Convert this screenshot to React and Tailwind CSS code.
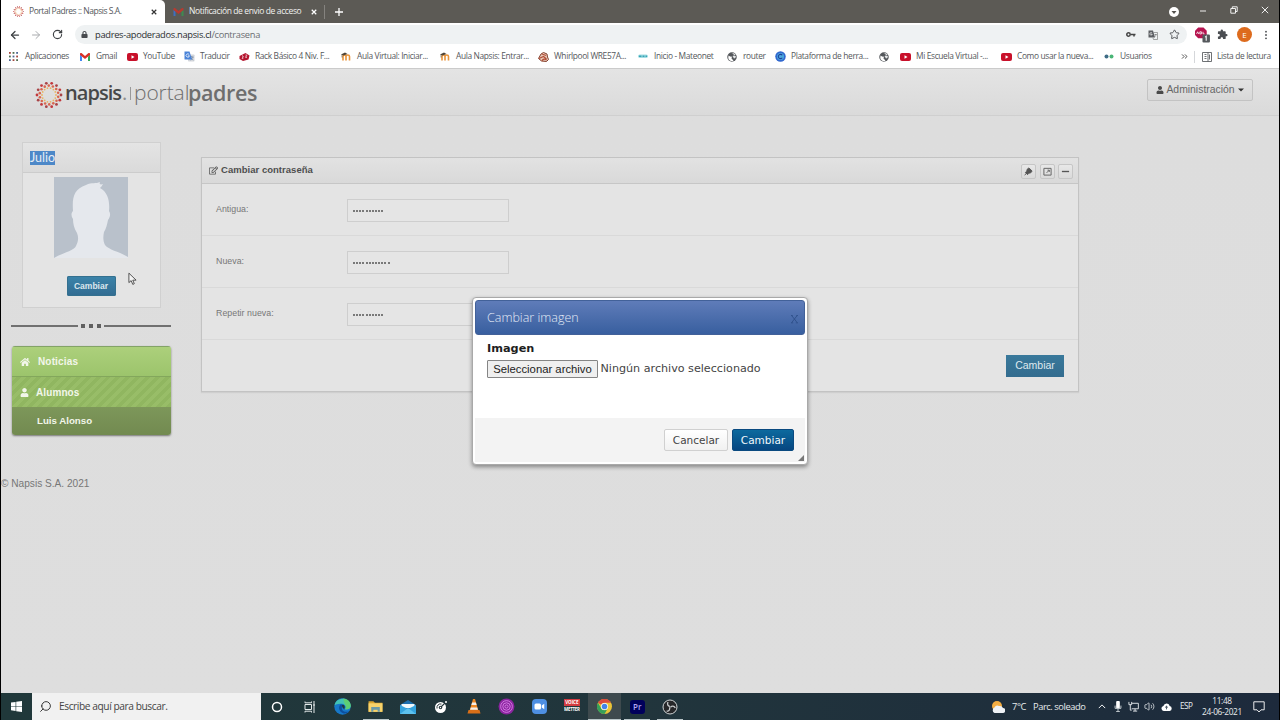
import React from "react";
import { FaUser, FaHome, FaRegEdit, FaLock } from "react-icons/fa";
import { MdExtension } from "react-icons/md";
import { ArrowLeft, ArrowRight, RotateCw, Star, Search, Volume2 } from "lucide-react";

const ui = "font-['Open_Sans','Noto_Sans',sans-serif]";
const arial = "font-['Liberation_Sans',Arial,sans-serif]";
const verdana = "font-['DejaVu_Sans',sans-serif]";

/* ---------- small drawings ---------- */
const DOTS = Array.from({ length: 14 }, (_, i) => (i * Math.PI * 2) / 14);

function Sun({ className }) {
  return (
    <svg viewBox="-14 -14 28 28" className={className}>
      {DOTS.map((a, i) => (
        <g key={i}>
          <circle cx={Math.cos(a) * 12} cy={Math.sin(a) * 12} r="1.4" fill={i % 2 ? "#c2383c" : "#a94447"} />
          <circle cx={Math.cos(a + 0.2) * 9.4} cy={Math.sin(a + 0.2) * 9.4} r="1.3" fill="#d9674f" />
          <circle cx={Math.cos(a) * 7} cy={Math.sin(a) * 7} r="0.9" fill="#e9b45e" />
        </g>
      ))}
    </svg>
  );
}

const GmailIcon = () => (
  <svg viewBox="0 0 20 16" className="h-[8px] w-[10px]">
    <path d="M0 3v13h4V7z" fill="#4285f4" />
    <path d="M20 3v13h-4V7z" fill="#34a853" />
    <path d="M0 2q0-3 3-2l7 6 7-6q3-1 3 2v2L10 12 0 4z" fill="#d93025" />
  </svg>
);
const YouTubeIcon = () => (
  <svg viewBox="0 0 22 16" className="h-[8px] w-[11px]">
    <rect width="22" height="16" rx="4" fill="#c8102a" />
    <path d="M9 4.500v7l6-3.500z" fill="#fff" />
  </svg>
);
const AppsIcon = () => (
  <svg viewBox="0 0 10 10" className="size-[9px]">
    {[0, 4, 8].map((y, r) =>
      [0, 4, 8].map((x, c) => (
        <rect key={x + "-" + y} x={x} y={y} width="2" height="2" fill={["#a3483e", "#4f6d4e", "#4c6592"][(r + c) % 3]} />
      ))
    )}
  </svg>
);
const TranslateIcon = () => (
  <svg viewBox="0 0 22 22" className="size-[11px]">
    <rect x="8" y="7" width="13" height="14" rx="1.500" fill="#d3d6db" />
    <path d="M12 12h7M15.500 10v2M18 12c-1 3-3 4-5 6M13.500 14l5 4" stroke="#67809f" strokeWidth="1.300" fill="none" />
    <path d="M1 1h10l5 16H2q-1 0-1-1z" fill="#4a83d8" />
    <path d="M10.500 7.500a3.300 3.300 0 1 0 .3 2.200H8" stroke="#fff" strokeWidth="1.500" fill="none" />
  </svg>
);
const RackIcon = () => (
  <svg viewBox="0 0 22 18" className="h-[10px] w-[11px]">
    <path d="M1 7 13 1l8 5-2 8-11 3-7-4z" fill="#b5152f" />
    <path d="M6 7c3-1 3 1 1 3s0 3 2 1M13 5c3-1 3 1 1 3s0 3 2 1" stroke="#fff" strokeWidth="1.500" fill="none" />
  </svg>
);
const MoodleIcon = () => (
  <svg viewBox="0 0 22 18" className="h-[9px] w-[11px]">
    <path d="M4 17V9q0-3 3-3t3 3v8M10 9q0-3 3.500-3T17 9v8" stroke="#e9943a" strokeWidth="3.200" fill="none" />
    <path d="M0 5 8 1l5 3-8 3z" fill="#4f4436" />
    <path d="M2 5v6" stroke="#4f4436" strokeWidth="1.200" />
  </svg>
);
const WhirlIcon = () => (
  <svg viewBox="0 0 22 20" className="h-[10px] w-[11px]">
    <path d="M1 13 6 4l5-3 7 3 1 6 2 5-4 4-10-1z" fill="#e8c9b8" stroke="#83412f" strokeWidth="2" />
    <path d="M2 13l9-4 6 5M8 4l8 3M8 18c2-5 6-4 10-2" stroke="#b24f38" strokeWidth="2.300" fill="none" />
  </svg>
);
const MateoIcon = () => (
  <svg viewBox="0 0 20 10" className="h-[5px] w-[10px]">
    <rect y="1" width="20" height="7" rx="3.500" fill="#a5dde4" />
    <path d="M2 4.500h5M9 4.500h4M15 4.500h3" stroke="#38a5b5" strokeWidth="3" />
  </svg>
);
const GlobeIcon = () => (
  <svg viewBox="0 0 20 20" className="size-[10px]">
    <circle cx="10" cy="10" r="9.500" fill="#54575b" />
    <path d="M3 7q3 3 7 2l-1 4 3 3 1 2.500Q4 19 2.500 12zM9 2q4 0 4 3l3 1 1-1q-3-4-8-3z" fill="#fff" />
    <path d="M11 8q4-2 7 1-1 4-4 4z" fill="#e6e8ea" />
  </svg>
);
const PlatIcon = () => (
  <svg viewBox="0 0 22 22" className="size-[11px]">
    <circle cx="11" cy="11" r="10.500" fill="#3168cf" />
    <circle cx="11" cy="11" r="7" fill="#4ba8dc" />
    <path d="M14.500 8.500a4.300 4.300 0 1 0 0 5" stroke="#203f9c" strokeWidth="2.200" fill="none" />
  </svg>
);
const UsersDots = () => (
  <svg viewBox="0 0 20 10" className="h-[5px] w-[10px]">
    <circle cx="5" cy="5" r="4" fill="#3f6c86" />
    <circle cx="15" cy="5" r="4" fill="#49b576" />
  </svg>
);

const BOOKMARKS = [
  { t: "Aplicaciones", I: AppsIcon, c: "w-[71px]" },
  { t: "Gmail", I: GmailIcon, c: "w-[47px]" },
  { t: "YouTube", I: YouTubeIcon, c: "w-[57px]" },
  { t: "Traducir", I: TranslateIcon, c: "w-[55px]" },
  { t: "Rack Básico 4 Niv. F...", I: RackIcon, c: "w-[102px]" },
  { t: "Aula Virtual: Iniciar...", I: MoodleIcon, c: "w-[99px]" },
  { t: "Aula Napsis: Entrar...", I: MoodleIcon, c: "w-[98px]" },
  { t: "Whirlpool WRE57A...", I: WhirlIcon, c: "w-[100px]" },
  { t: "Inicio - Mateonet", I: MateoIcon, c: "w-[89px]" },
  { t: "router", I: GlobeIcon, c: "w-[48px]" },
  { t: "Plataforma de herra...", I: PlatIcon, c: "w-[104px]" },
  { t: "", I: GlobeIcon, c: "w-[21px]" },
  { t: "Mi Escuela Virtual -...", I: YouTubeIcon, c: "w-[101px]" },
  { t: "Como usar la nueva...", I: YouTubeIcon, c: "w-[103px]" },
  { t: "Usuarios", I: UsersDots, c: "w-[77px]" },
];

function Browser() {
  return (
    <div className={"w-full shrink-0 " + ui}>
      <div className="flex h-[23px] items-center bg-[#5c5a55] text-[8.500px] leading-none">
        <div className="flex h-full w-[164px] items-center rounded-tr-[5px] bg-white pl-[12px] text-[#55585c]">
          <Sun className="size-[11px]" />
          <span className="ml-[5px] w-[122px] whitespace-nowrap tracking-[-0.46px]">Portal Padres :: Napsis S.A.</span>
          <svg viewBox="0 0 8 8" className="size-[6px]"><path d="M1 1l6 6M7 1L1 7" stroke="#333" strokeWidth="1.600" /></svg>
        </div>
        <div className="flex h-full items-center pl-[8px] text-[#f1f1ef]">
          <svg viewBox="0 0 20 16" className="h-[8px] w-[11px]">
            <path d="M0 3v13h4V7z" fill="#3f6fc0" /><path d="M20 3v13h-4V7z" fill="#3e8b50" />
            <path d="M0 2q0-3 3-2l7 6 7-6q3-1 3 2v2L10 12 0 4z" fill="#b73a30" />
          </svg>
          <span className="ml-[5px] w-[122px] whitespace-nowrap tracking-[-0.38px]">Notificación de envio de acceso</span>
          <svg viewBox="0 0 8 8" className="size-[6px]"><path d="M1 1l6 6M7 1L1 7" stroke="#fff" strokeWidth="1.600" /></svg>
          <div className="ml-[7px] h-[14px] w-px bg-[#85837f]" />
          <svg viewBox="0 0 8 8" className="ml-[10px] size-[8px]"><path d="M4 0v8M0 4h8" stroke="#fff" strokeWidth="1.300" /></svg>
        </div>
        <div className="ml-auto flex h-full items-center pr-[10px]">
          <svg viewBox="0 0 10 10" className="size-[10px]"><circle cx="5" cy="5" r="5" fill="#fff" /><path d="M2.500 4h5L5 7z" fill="#54524e" /></svg>
          <svg viewBox="0 0 8 8" className="mb-[2px] ml-[20px] size-[8px]"><path d="M1 4h6" stroke="#fff" strokeWidth="0.900" /></svg>
          <svg viewBox="0 0 8 8" className="mb-[3px] ml-[23px] size-[8px]"><path d="M.8 2.500h4.700v4.700H.8zM2.300 2.500V.8h4.900v4.700H5.500" fill="none" stroke="#fff" strokeWidth="0.900" /></svg>
          <svg viewBox="0 0 8 8" className="mb-[4px] ml-[23px] size-[8px]"><path d="M.8.8l6.400 6.400M7.200.8L.8 7.200" stroke="#fff" strokeWidth="0.900" /></svg>
        </div>
      </div>

      <div className="flex h-[23px] items-center bg-white pl-[8px] pr-[6px]">
        <ArrowLeft size={12} color="#3f4245" strokeWidth={2.5} />
        <ArrowRight size={12} color="#a9abae" strokeWidth={2} className="ml-[9px]" />
        <RotateCw size={11} color="#3f4245" strokeWidth={2.5} className="ml-[10px]" />
        <div className="ml-[12px] flex h-[19px] w-[1112px] items-center rounded-full bg-[#eff2f3] pl-[6px] text-[9.300px] leading-none text-[#2b2e31]">
          <FaLock size={7} color="#484b4f" />
          <span className="ml-[7px] whitespace-nowrap tracking-[-0.3px]">
            padres-apoderados.napsis.cl<span className="text-[#6b6e72]">/contrasena</span>
          </span>
          <div className="ml-auto flex items-center gap-[11px] pr-[7px]">
            <svg viewBox="0 0 20 10" className="mr-[1px] h-[5px] w-[10px]"><circle cx="5" cy="5" r="3.400" fill="none" stroke="#444" strokeWidth="3" /><path d="M9 5h10M16 5v4" stroke="#444" strokeWidth="3" /></svg>
            <svg viewBox="0 0 20 20" className="size-[10px]">
              <path d="M1 1h9l4 14H1z" fill="#5c5f63" /><path d="M11 5h8v14h-8l-1-3" fill="none" stroke="#777" strokeWidth="1.300" />
              <path d="M8 6a2.500 2.500 0 1 0 .5 2.500H6" fill="none" stroke="#fff" strokeWidth="1.300" /><path d="M13 9h5M15 8q2 4-2 6" stroke="#777" fill="none" strokeWidth="1.300" />
            </svg>
            <Star size={11} color="#4b4e52" strokeWidth={2} />
          </div>
        </div>
        <svg viewBox="0 0 30 30" className="ml-[8px] size-[16px]">
          <path d="M6 1h10l6 6v8l-6 6H6l-6-6V7z" fill="#b5144f" />
          <path d="M3 13l2-4 2 4M9 9v4h3V9zM15 9v4h3" stroke="#fff" strokeWidth="1.500" fill="none" />
          <rect x="14" y="14" width="14" height="15" rx="2" fill="#55585c" />
          <path d="M19 19l2-1.500V26" stroke="#fff" strokeWidth="2" fill="none" />
        </svg>
        <MdExtension size={11} color="#4b4e52" className="ml-[6px]" />
        <div className="ml-[9px] flex size-[15px] items-center justify-center rounded-full bg-[#dd6b1d] text-[8px] text-white">E</div>
        <svg viewBox="0 0 4 12" className="ml-[12px] h-[10px] w-[4px]" fill="#4b4e52"><circle cx="2" cy="2" r="1.100" /><circle cx="2" cy="6" r="1.100" /><circle cx="2" cy="10" r="1.100" /></svg>
      </div>

      <div className="flex h-[22px] items-center bg-white pb-[1px] pl-[8px] text-[8.400px] leading-none tracking-[-0.36px] text-[#55585c]">
        {BOOKMARKS.map(({ t, I, c }, i) => (
          <div key={i} className={"flex shrink-0 items-center whitespace-nowrap " + c}>
            <span className="flex w-[16px] shrink-0"><I /></span>
            {t}
          </div>
        ))}
        <svg viewBox="0 0 8 6" className="h-[5px] w-[7px]"><path d="M1 .5L3.500 3 1 5.500M4.500.5L7 3 4.500 5.500" fill="none" stroke="#444" strokeWidth="1.100" /></svg>
        <div className="ml-[6px] h-[12px] w-px bg-[#d5d7da]" />
        <svg viewBox="0 0 20 20" className="ml-[7px] size-[10px]"><path d="M1 1h18v18H1zM5 5h4M5 9h4M5 13h4M12 1v18M15 5v10" fill="none" stroke="#55585c" strokeWidth="1.700" /></svg>
        <span className="ml-[5px] whitespace-nowrap tracking-[-0.35px]">Lista de lectura</span>
      </div>
    </div>
  );
}

/* ---------- page ---------- */
function Header() {
  return (
    <div className="flex h-[48px] shrink-0 items-center justify-between border-b border-t border-b-[#cfcfcf] border-t-[#cbcbcb] bg-linear-to-b from-[#e4e4e4] to-[#dadada] pl-[34px] pr-[26px]">
      <div className={"flex h-full items-center leading-none text-[#6e6e6e] " + ui}>
        <Sun className="mt-[5px] size-[28px]" />
        <span className="ml-[2px] mt-[1px] w-[57px] text-[20px] font-semibold tracking-[-0.95px] text-[#484848]">napsis</span>
        <span className="mt-[1px] w-[8px] text-[20px] text-[#8f8f8f]">.</span>
        <span className="mt-[3px] h-[13px] w-px bg-[#999]" />
        <span className="ml-[3px] mt-[1px] w-[54px] text-[21px] font-light tracking-[-0.1px]">portal</span>
        <span className="mt-[1px] text-[21.500px] font-semibold tracking-[-0.4px]">padres</span>
      </div>
      <div className={"mt-[-4px] flex h-[22px] w-[106px] items-center justify-center whitespace-nowrap rounded-[2px] border border-[#c3c3c3] bg-linear-to-b from-[#e3e3e3] to-[#d8d8d8] text-[10.400px] text-[#666] " + arial}>
        <FaUser size={8} color="#4a4a4a" className="mr-[2px]" />
        Administración
        <svg viewBox="0 0 6 4" className="ml-[3px] h-[4px] w-[6px]"><path d="M0 .5h6L3 3.500z" fill="#333" /></svg>
      </div>
    </div>
  );
}

function Sidebar() {
  return (
    <div className={"flex w-[160px] shrink-0 flex-col " + arial}>
      <div className="ml-[11px] h-[166px] w-[139px] border border-[#d0d0d0] bg-[#e4e4e4]">
        <div className="flex h-[30px] items-center border-b border-[#cccccc] bg-linear-to-b from-[#e4e4e4] to-[#dadada] pl-[7px] font-[Lato,'Open_Sans',sans-serif] text-[12.500px]">
          <span className="h-[14px] bg-[#4d88c8] leading-[14px] text-[#e8eef5]">Julio</span>
        </div>
        <div className="flex flex-col items-center pr-px pt-[4px]">
          <svg viewBox="0 0 74 81" className="h-[81px] w-[74px]">
            <rect width="74" height="81" fill="#b9c1cb" />
            <path d="M0 82V81C8 76 20 74 22 69c2-4 3-8 1-13-3-5-4-9-4-14-2-3-2-6 0-8-1-14 1-22 13-26 6-3 10-1 14-3-1 2 0 3 3 2-1 2-2 3-3 4 8 4 10 14 9 23 2 3 1 6-1 9-1 5-2 9-4 12-1 5-1 9 1 13 4 5 15 7 23 12v1z" fill="#e5e8ed" />
          </svg>
          <div className="mt-[18px] flex h-[20px] w-[49px] items-center justify-center rounded-[2px] bg-linear-to-b from-[#3b84aa] to-[#326b91] text-[8.500px] font-bold text-[#dbe7ee] shadow-[inset_0_0_0_1px_#34708f]">
            Cambiar
          </div>
        </div>
      </div>
      <div className="mt-[15px] flex h-[5px] items-center">
        <div className="h-[2px] w-[67px] bg-[#707070]" />
        <div className="flex flex-1 justify-center gap-[4px]">
          <i className="size-[4px] bg-[#606060]" /><i className="size-[4px] bg-[#606060]" /><i className="size-[4px] bg-[#606060]" />
        </div>
        <div className="h-[2px] w-[67px] bg-[#707070]" />
      </div>
      <div className="ml-px mt-[18px] h-[89px] w-[159px] overflow-hidden rounded-[3px] text-[10px] font-bold text-[#f2f6ea] shadow-[0_1px_2px_#777]">
        <div className="flex h-[31px] items-center border-b border-t border-b-[#83a75c] border-t-[#83a367] bg-linear-to-b from-[#acd07b] to-[#9cc46c] pl-[8px]">
          <FaHome size={10} /><span className="ml-[8px] tracking-[0.15px]">Noticias</span>
        </div>
        <div className="flex h-[30px] items-center bg-[repeating-linear-gradient(135deg,#98bd68_0_3.500px,#90b660_3.500px_7px)] pl-[8px]">
          <FaUser size={9} /><span className="ml-[7px] tracking-[0.1px]">Alumnos</span>
        </div>
        <div className="h-[28px] bg-linear-to-b from-[#7d975a] to-[#728a50] pl-[25px] leading-[27px]">
          <span className="text-[9.700px]">Luis Alonso</span>
        </div>
      </div>
    </div>
  );
}

function Tool({ children }) {
  return (
    <div className="flex size-[15px] items-center justify-center rounded-[2px] border border-[#c6c6c6] bg-linear-to-b from-[#e8e8e8] to-[#dadada]">{children}</div>
  );
}

const FIELDS = [
  { label: "Antigua:", dots: 10 },
  { label: "Nueva:", dots: 12 },
  { label: "Repetir nueva:", dots: 10 },
];

function Panel() {
  return (
    <div className={"ml-[30px] mt-[15px] flex h-[235px] w-[878px] shrink-0 flex-col border border-[#c3c3c3] bg-[#e4e4e4] shadow-[0_1px_1px_#cfcfcf] " + arial}>
      <div className="flex h-[26px] items-center border-b border-[#c6c6c6] bg-linear-to-b from-[#e2e2e2] to-[#d9d9d9] pl-[7px] pr-[5px]">
        <FaRegEdit size={9} color="#555" />
        <span className="ml-[3px] text-[9.500px] font-bold tracking-[0.03px] text-[#4e4e4e]">Cambiar contraseña</span>
        <div className="ml-auto mt-[2px] flex gap-[3.500px]">
          <Tool><svg viewBox="0 0 10 10" className="size-[9px]"><path d="M5.500 1l3.500 3.500-1.500 2-2.500.5-1 1.500L1.500 6 3 5l.5-2.500zM3 6.500L.8 9.200" fill="#555" stroke="#555" /></svg></Tool>
          <Tool><svg viewBox="0 0 10 10" className="size-[9px]"><path d="M1 1.500h8v7.500H1zM4 6.500l3-3M5 3.500h2v2" fill="none" stroke="#666" strokeWidth="1.100" /></svg></Tool>
          <Tool><svg viewBox="0 0 10 10" className="size-[9px]"><path d="M1 5h8" stroke="#555" strokeWidth="1.500" /></svg></Tool>
        </div>
      </div>
      {FIELDS.map((f) => (
        <div key={f.label} className="flex h-[52px] items-center border-b border-[#d9d9d9] pl-[14px] pt-[2px]">
          <span className="w-[131px] pb-[2px] text-[8.800px] tracking-[0.03px] text-[#777]">{f.label}</span>
          <div className="flex h-[23px] w-[162px] items-center gap-[1.150px] border border-[#cecece] bg-[#e5e5e5] pl-[5px]">
            {Array.from({ length: f.dots }, (_, i) => <i key={i} className="size-[2px] rounded-full bg-[#555]" />)}
          </div>
        </div>
      ))}
      <div className="flex flex-1 items-center justify-end pr-[14px]">
        <div className="flex h-[22px] w-[58px] items-center justify-center bg-linear-to-b from-[#39799b] to-[#336c8f] text-[10.500px] text-[#dfe9ef]">Cambiar</div>
      </div>
    </div>
  );
}

function Modal() {
  return (
    <div className={"absolute left-[471px] top-[297px] flex h-[168px] w-[336px] flex-col rounded-[4px] border border-[#a9a9a9] bg-white p-[2px] shadow-[0_2px_4px_rgba(0,0,0,0.4)] " + verdana}>
      <div className={"flex h-[35px] shrink-0 items-center justify-between rounded-[3px] border border-[#426199] bg-linear-to-b from-[#5f7cb9] to-[#385f9f] pl-[11px] pr-[6px] pt-[1px] text-[12.500px] font-light text-[#e3eaf6] " + ui}>
        <span>Cambiar imagen</span>
        <svg viewBox="0 0 8 10" className="mt-[2px] h-[9px] w-[7px]"><path d="M.8.5l6.200 8M7 .5L.8 8.500M0 8.800h2.500M5.500 8.800H8M0 .5h2M6 .5h2" stroke="#2b4d86" strokeWidth="0.900" fill="none" /></svg>
      </div>
      <div className="flex-1 pl-[12px] pt-[7px]">
        <div className="text-[11.300px] font-bold leading-[14px] text-[#1e1e1e]">Imagen</div>
        <div className="mt-[4px] flex items-center">
          <div className={"flex h-[18px] w-[111px] items-center justify-center whitespace-nowrap rounded-[1px] border border-[#858585] bg-[#efefef] text-[11.300px] text-[#1c1c1c] " + arial}>Seleccionar archivo</div>
          <span className="ml-[2.500px] whitespace-nowrap text-[11.150px] text-[#444]">Ningún archivo seleccionado</span>
        </div>
      </div>
      <div className="flex h-[44px] shrink-0 items-start justify-end gap-[4px] bg-[#f3f3f3] pr-[11px] pt-[11px] text-[10.500px]">
        <div className="flex h-[22px] w-[64px] items-center justify-center rounded-[2px] border border-[#d0d0d0] bg-linear-to-b from-white to-[#f1f1f1] pt-[2px] text-[#444]">Cancelar</div>
        <div className="flex h-[22px] w-[62px] items-center justify-center rounded-[2px] border border-[#0a4a80] bg-linear-to-b from-[#0d6a9e] to-[#074680] pt-[2px] text-[#f2f8fc]">Cambiar</div>
      </div>
      <svg viewBox="0 0 6 6" className="absolute bottom-[3px] right-[3px] size-[6px]"><path d="M6 0v6H0z" fill="#777" /></svg>
    </div>
  );
}

/* ---------- taskbar ---------- */
function TaskCell({ on, active, children }) {
  return (
    <div className={"relative flex h-full w-[32.720px] shrink-0 items-center justify-center " + (active ? "bg-[#3e4a4e]" : "")}>
      {children}
      {on && <div className={"absolute bottom-0 h-[1.500px] bg-[#b9c6c9] " + (active ? "w-full" : "w-[26px]")} />}
    </div>
  );
}

function Taskbar() {
  return (
    <div className={"flex h-[27px] shrink-0 items-center bg-linear-to-r from-[#20383a] via-[#21353c] to-[#1d2a3c] text-[#e8ecee] " + ui}>
      <div className="flex w-[31px] justify-center">
        <svg viewBox="0 0 12 12" className="size-[11px]"><path d="M0 1.700l5-.7v4.600H0zM5.700.9L12 0v5.600H5.700zM0 6.300h5v4.600l-5-.7zM5.700 6.300H12V12l-6.300-.9z" fill="#fff" /></svg>
      </div>
      <div className="flex h-full w-[229px] items-center bg-[#f1f1f1] pl-[7px] text-[10.200px] text-[#444]">
        <Search size={13} color="#333" strokeWidth={1.8} className="-scale-x-100" />
        <span className="ml-[7px] whitespace-nowrap pt-px tracking-[-0.43px]">Escribe aquí para buscar.</span>
      </div>
      <TaskCell><svg viewBox="0 0 12 12" className="size-[12px]"><circle cx="6" cy="6" r="4.500" fill="none" stroke="#fff" strokeWidth="1.500" /></svg></TaskCell>
      <TaskCell><svg viewBox="0 0 12 12" className="size-[12px]"><path d="M1 3.500h6.500v5H1zM1 .5v1.300h6.500V.5M1 11.500v-1.300h6.500v1.300M10 0v12M9 4h2" fill="none" stroke="#e4e9ea" strokeWidth="1" /></svg></TaskCell>
      <TaskCell>
        <svg viewBox="0 0 32 32" className="size-[17px]">
          <circle cx="16" cy="16" r="15.500" fill="#1778c9" />
          <path d="M1 14C4-3 30-2 31.500 14c0 6-5 9-11 7 3-3 1-9-5-10C9 10 3 12 1 14z" fill="#43c3b4" />
          <path d="M17 1c9 0 14 7 14.500 13 0 6-5 8-11 7 3-3 3-6 0-9z" fill="#62d069" opacity=".85" />
          <path d="M12 12c-5 6-2 14 6 17 4 1 8-1 10-4-8 3-15-1-13-9q1-3 0-4z" fill="#0d4f9e" />
          <path d="M15 13c4-1 7 3 4 8q-5-3-4-8z" fill="#21383d" />
        </svg>
      </TaskCell>
      <TaskCell on>
        <svg viewBox="0 0 28 24" className="h-[13px] w-[15px]"><path d="M1 2h9l3 3h14v17H1z" fill="#dba52f" /><path d="M1 6h26v16H1z" fill="#f7d36b" /><path d="M6 13h16v9h-4v-4h-8v4H6z" fill="#6b9aa8" /></svg>
      </TaskCell>
      <TaskCell>
        <svg viewBox="0 0 32 28" className="h-[14px] w-[16px]"><path d="M0 10L16 0l16 10v18H0z" fill="#1b6eae" /><path d="M3 8h26v8H3z" fill="#eef7fb" /><path d="M0 10l16 8 16-8v18H0z" fill="#33a3de" /><path d="M0 28l16-12 16 12z" fill="#5dc2ef" /></svg>
      </TaskCell>
      <TaskCell>
        <svg viewBox="0 0 28 28" className="size-[14px]"><circle cx="13" cy="15" r="11" fill="#fff" /><path d="M6 17a7.500 7.500 0 0 1 9-9" stroke="#26383d" strokeWidth="2" fill="none" /><circle cx="13" cy="15" r="3.500" fill="#26383d" /><path d="M13 15L24 4" stroke="#26383d" strokeWidth="2.200" /><circle cx="24" cy="4" r="2" fill="#fff" /><circle cx="13" cy="15" r="1.300" fill="#fff" /></svg>
      </TaskCell>
      <TaskCell>
        <svg viewBox="0 0 28 30" className="h-[15px] w-[14px]"><path d="M12 0h4l7 24H5z" fill="#ee8722" /><path d="M10.300 7h7.400l1.600 5H8.700zM7.500 17h13l1.300 4.500H6.200z" fill="#f3efe9" /><path d="M3 22h22l2 7H1z" fill="#d96f18" /></svg>
      </TaskCell>
      <TaskCell>
        <svg viewBox="0 0 32 32" className="size-[17px]"><circle cx="16" cy="16" r="15" fill="#8b249f" /><g fill="none" stroke="#d981e8" strokeWidth="1.700"><circle cx="16" cy="16" r="11" /><circle cx="16" cy="16" r="7" /><circle cx="16" cy="16" r="3" /></g></svg>
      </TaskCell>
      <TaskCell>
        <svg viewBox="0 0 30 30" className="size-[15px]"><rect width="30" height="30" rx="8" fill="#4e8fe2" /><rect x="5" y="9" width="13" height="12" rx="3" fill="#fff" /><path d="M19.500 13l5-3.500v11l-5-3.500z" fill="#fff" /></svg>
      </TaskCell>
      <TaskCell>
        <div className="flex w-[16px] flex-col items-center overflow-hidden pb-[2px] text-[4.500px] font-bold leading-none text-white">
          <span className="flex h-[7px] w-full items-center justify-center bg-[#d33b41]">VOICE</span>
          <span className="flex h-[7px] items-center tracking-[-0.3px]">METTER</span>
        </div>
      </TaskCell>
      <TaskCell on active>
        <svg viewBox="-16 -16 32 32" className="size-[15px]">
          <circle r="16" fill="#eac437" />
          <path d="M-13.900-8A16 16 0 0 1 13.900-8H0a8 8 0 0 0-7 4z" fill="#dd4b3e" />
          <path d="M-13.900-8A16 16 0 0 0 0 16L7 4a8 8 0 0 1-14 0z" fill="#36a05a" />
          <circle r="7.600" fill="#fff" /><circle r="6" fill="#4583e8" />
        </svg>
      </TaskCell>
      <TaskCell on><div className="flex h-[14px] w-[15px] items-center justify-center rounded-[3px] bg-[#00005b] text-[8px] font-semibold leading-none text-[#b4a5f5]">Pr</div></TaskCell>
      <TaskCell on>
        <svg viewBox="0 0 32 32" className="size-[16px]"><circle cx="16" cy="16" r="14" fill="#262729" stroke="#ced2d3" strokeWidth="2" />
          <g fill="none" stroke="#c6cacc" strokeWidth="2.600"><path d="M16 15q-7-2-4-9" /><path d="M16 15q-7-2-4-9" transform="rotate(120 16 16)" /><path d="M16 15q-7-2-4-9" transform="rotate(240 16 16)" /></g>
        </svg>
      </TaskCell>
      <div className="ml-auto flex h-full items-center whitespace-nowrap pr-[14px] text-[9.300px] leading-none">
        <svg viewBox="0 0 28 26" className="size-[14px]"><circle cx="12" cy="11" r="10" fill="#f3ad42" /><path d="M7 25a6 6 0 0 1 0-11q3-6 9-3 6-1 8 4a5 5 0 0 1-1 10z" fill="#eef2f6" /></svg>
        <span className="ml-[7px] w-[21px] tracking-[-0.4px]">7°C</span>
        <span className="w-[65px] tracking-[-0.42px]">Parc. soleado</span>
        <svg viewBox="0 0 10 6" className="h-[5px] w-[8px]"><path d="M1 5l4-4 4 4" stroke="#fff" fill="none" strokeWidth="1.200" /></svg>
        <svg viewBox="0 0 8 12" className="ml-[8px] h-[11px] w-[8px]"><rect x="2" width="4" height="8" rx="1" fill="#fff" /><path d="M.8 5v3h6.400V5M4 8v3M2 11.500h4" stroke="#cfd6da" fill="none" /></svg>
        <svg viewBox="0 0 12 12" className="ml-[6px] size-[11px]"><path d="M4 2.500h7.300v6H4M5.500 11h4.500M7.700 8.500V11M1 1v3h3V1M2.500 4v6H4" stroke="#e6eaed" fill="none" strokeWidth="1" /></svg>
        <Volume2 size={11} strokeWidth={1.7} className="ml-[5px]" />
        <svg viewBox="0 0 14 10" className="ml-[6px] h-[8px] w-[11px]"><path d="M3.500 10a3.200 3.200 0 0 1-.5-6.300Q4 .3 7.500.5q3 .3 3.500 3.200a3.200 3.200 0 0 1 0 6.300z" fill="#fff" /><path d="M7 8V4M5.200 5.700L7 4l1.800 1.700" stroke="#213040" fill="none" /></svg>
        <span className="ml-[8px] w-[22px] text-[8.200px] tracking-[-0.5px]">ESP</span>
        <div className="flex w-[40px] flex-col items-center gap-[3px] text-[8.300px] tracking-[-0.35px]"><span>11:48</span><span>24-06-2021</span></div>
        <svg viewBox="0 0 12 12" className="ml-[11px] size-[12px]"><path d="M.8.8h10.400v8H8L6 11 4 8.800H.8z" stroke="#fff" fill="none" strokeWidth="0.900" /></svg>
      </div>
    </div>
  );
}

export default function App() {
  return (
    <div className="relative flex h-[720px] w-[1280px] flex-col overflow-hidden border-x border-black bg-[#dedede]">
      <Browser />
      <Header />
      <div className="flex flex-1 flex-col overflow-hidden bg-linear-to-b from-[#dddddd] to-[#dedede] pt-[26px]">
        <div className="flex items-start pl-[10px]">
          <Sidebar />
          <Panel />
        </div>
        <div className={"mt-[42px] text-[10.150px] leading-[14px] text-[#777] " + arial}>© Napsis S.A. 2021</div>
      </div>
      <Taskbar />
      <Modal />
      <svg viewBox="0 0 10 15" className="absolute left-[127px] top-[272px] h-[14px] w-[9px]"><path d="M1 1v10.500l2.500-2.200L5.300 13.500l1.700-.8L5.300 8.800H9z" fill="#f4f4f4" stroke="#333" strokeWidth="0.900" /></svg>
    </div>
  );
}
